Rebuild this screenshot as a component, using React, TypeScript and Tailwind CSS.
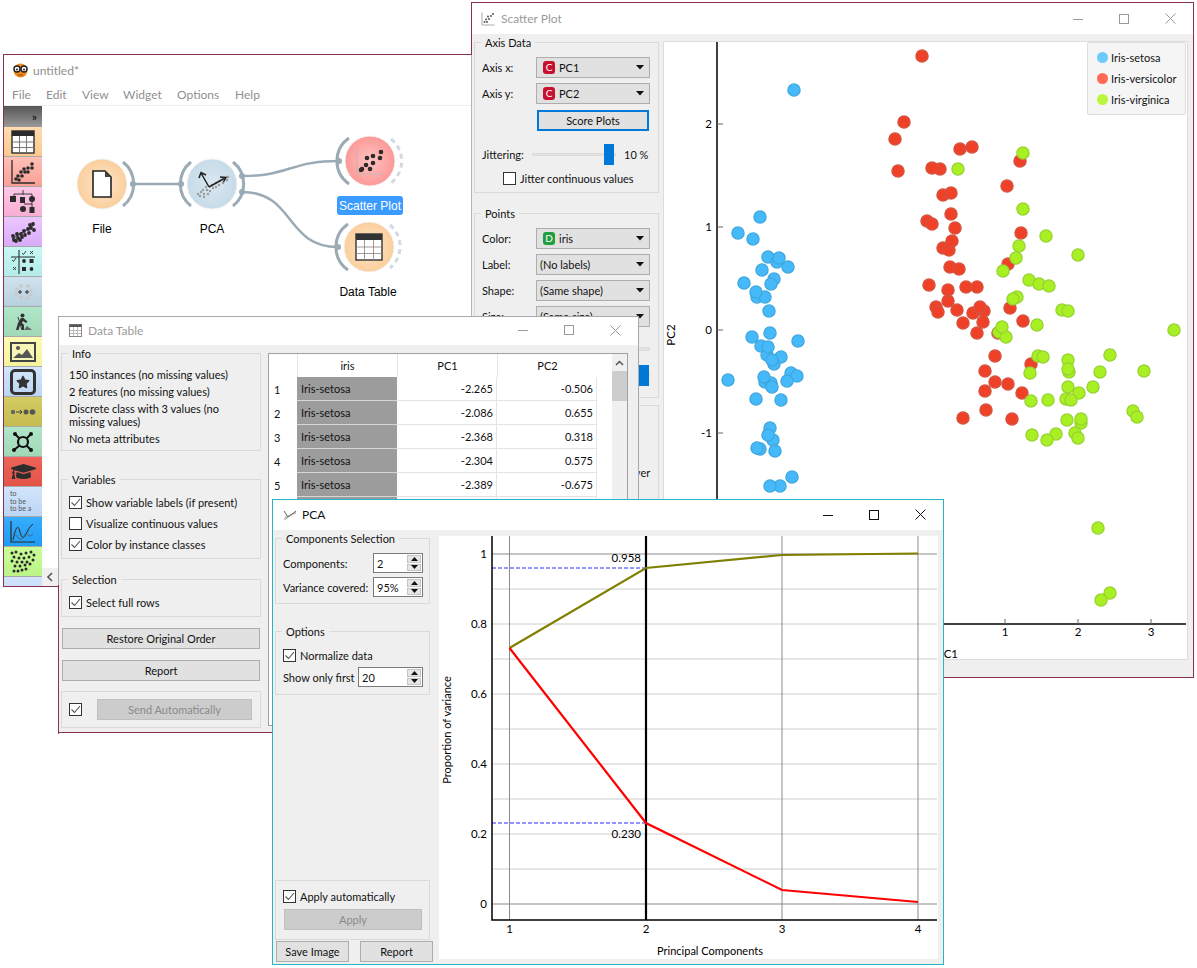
import React from 'react';
import { FaGraduationCap, FaStar } from 'react-icons/fa';

const BLUE: [number, number][] = [[794,90],[760,217],[738,233],[753,239],[768,257],[777,262],[779,258],[788,267],[762,270],[744,283],[774,279],[771,284],[757,297],[765,297],[756,292],[769,311],[770,333],[752,337],[798,341],[761,346],[767,355],[768,347],[781,357],[774,364],[772,360],[728,380],[791,373],[797,376],[787,381],[765,382],[771,383],[764,377],[772,387],[756,399],[781,400],[770,428],[773,440],[768,435],[760,449],[757,448],[775,451],[792,477],[780,486],[770,486]];
const RED: [number, number][] = [[922,56],[904,122],[895,139],[898,171],[940,169],[932,168],[927,221],[932,224],[960,149],[972,147],[1020,161],[1007,186],[943,195],[951,193],[951,214],[955,228],[1021,233],[943,248],[949,250],[952,241],[1008,264],[950,267],[959,269],[929,285],[948,301],[948,290],[966,287],[977,287],[936,307],[938,312],[957,310],[984,311],[973,313],[980,307],[1010,308],[1023,321],[963,323],[983,322],[977,333],[998,333],[995,356],[1031,364],[985,371],[995,382],[1008,384],[985,391],[1022,393],[986,410],[963,418],[1012,419]];
const GREEN: [number, number][] = [[1023,153],[958,169],[1023,209],[1046,236],[1078,255],[1019,246],[1016,258],[1003,271],[1029,280],[1039,284],[1049,286],[1017,297],[1013,299],[1062,310],[1068,311],[1037,325],[999,332],[1006,337],[1002,327],[1174,330],[1038,356],[1043,357],[1110,355],[1068,360],[1069,372],[1068,369],[1030,373],[1100,372],[1144,371],[1068,387],[1093,387],[1079,393],[1066,399],[1071,400],[1031,401],[1048,400],[1133,411],[1137,417],[1067,420],[1081,423],[1081,419],[1075,433],[1078,438],[1056,434],[1047,440],[1032,435],[1098,528],[1110,593],[1101,600]];

const ROWS = [
  ['1', '-2.265', '-0.506'],
  ['2', '-2.086', '0.655'],
  ['3', '-2.368', '0.318'],
  ['4', '-2.304', '0.575'],
  ['5', '-2.389', '-0.675'],
  ['6', '-2.070', '-1.519'],
];

const dark = '#2b2b2b';

function TableGlyph() {
  return (
    <svg width="26" height="26" viewBox="0 0 26 26">
      <rect x="2" y="2" width="22" height="22" fill="#fff" stroke={dark} strokeWidth="1.4" />
      <rect x="2" y="2" width="22" height="5" fill={dark} />
      <path d="M9.5 7v17M16.5 7v17M2 13h22M2 18.500h22" stroke="#777" strokeWidth="1" />
    </svg>
  );
}

const Dots = ({ pts, r = 1.6 }: { pts: number[][]; r?: number }) => (
  <>
    {pts.map(([x, y], i) => (
      <circle key={i} cx={x} cy={y} r={r} fill={dark} />
    ))}
  </>
);

const TOOLS: { cls: string; icon: React.ReactNode }[] = [
  { cls: 'from-[#ffdcb0] to-[#fbc98f]', icon: <TableGlyph /> },
  {
    cls: 'from-[#ffc0b6] to-[#f9a096]',
    icon: (
      <svg width="26" height="26" viewBox="0 0 26 26">
        <path d="M2 1v23h23" fill="none" stroke={dark} strokeWidth="1.3" />
        <Dots r={1.8} pts={[[6,20],[9,21],[8,17],[12,17],[11,13],[15,13],[14,10],[18,9],[18,13],[22,5],[22,9]]} />
      </svg>
    ),
  },
  {
    cls: 'from-[#ffc8e6] to-[#f7aed4]',
    icon: (
      <svg width="28" height="26" viewBox="0 0 28 26">
        <path d="M14 1v5M5 9V5h18v4M23 9v6h-8M23 15v3" fill="none" stroke={dark} strokeWidth="0.9" />
        <rect x="1" y="7" width="6" height="6" fill={dark} />
        <rect x="11" y="8" width="5" height="6" fill={dark} />
        <circle cx="23" cy="10" r="3" fill={dark} />
        <circle cx="14" cy="20" r="3" fill={dark} />
        <rect x="20.500" y="18" width="5" height="6" fill={dark} />
      </svg>
    ),
  },
  {
    cls: 'from-[#ecc6ff] to-[#d8acf8]',
    icon: (
      <svg width="26" height="24" viewBox="0 0 26 24">
        <path d="M2 19L24 5" stroke={dark} strokeWidth="1" />
        <Dots r={1.9} pts={[[3,16],[4,20],[7,14],[8,18],[6,21],[11,14],[12,17],[10,20],[14,11],[15,15],[18,9],[19,13],[21,8],[23,4],[24,10],[20,5]]} />
      </svg>
    ),
  },
  {
    cls: 'from-[#c8f8f4] to-[#b4ece8]',
    icon: (
      <svg width="26" height="26" viewBox="0 0 26 26">
        <path d="M1 8h24M9 1v24" stroke={dark} strokeWidth="1.1" />
        <path d="M12 4l1.500 1.500L16 2M2 11l1.500 1.500L6 9" fill="none" stroke={dark} strokeWidth="0.9" />
        <path d="M20 2l3 3M23 2l-3 3M3 18l3 3M6 18l-3 3" stroke={dark} strokeWidth="0.9" />
        <circle cx="14" cy="12" r="1.900" fill={dark} />
        <rect x="19.500" y="10" width="4" height="4" fill={dark} />
        <rect x="12" y="18" width="4" height="4" fill={dark} />
        <circle cx="21.500" cy="20" r="1.900" fill={dark} />
      </svg>
    ),
  },
  {
    cls: 'from-[#d0e2ee] to-[#b8d0de]',
    icon: (
      <svg width="20" height="18" viewBox="0 0 20 18">
        <g fill="#c8c8c8">
          <circle cx="4" cy="6" r="1.800" /><circle cx="8" cy="3" r="1.800" /><circle cx="3" cy="11" r="1.800" />
          <circle cx="8" cy="14" r="1.800" /><circle cx="15" cy="3" r="1.800" /><circle cx="18" cy="8" r="1.800" />
          <circle cx="14" cy="15" r="1.800" /><circle cx="17" cy="12" r="1.800" />
        </g>
        <path d="M5 9h4M7 7v4M12 9h4M14 7v4" stroke={dark} strokeWidth="1" />
      </svg>
    ),
  },
  {
    cls: 'from-[#b0e6c8] to-[#a0d8b8]',
    icon: (
      <svg width="18" height="18" viewBox="0 0 18 18">
        <circle cx="8.500" cy="2.500" r="2" fill="#333" />
        <path d="M7 5L4 10L2 17H4.500L6 12L8 13.500V17H10V12L8 10L9 8L12 10L13.500 8.500L9.500 5Z" fill="#333" />
        <path d="M4 4L8 17" stroke="#333" strokeWidth="1" />
        <path d="M10 17L13 13L18 17Z" fill="#666" />
      </svg>
    ),
  },
  {
    cls: 'from-[#fbfbb4] to-[#f4f49c]',
    icon: (
      <svg width="26" height="20" viewBox="0 0 26 20">
        <rect x="1" y="1" width="24" height="18" fill="#f6f6b8" stroke="#444" strokeWidth="2" />
        <circle cx="8" cy="6" r="2" fill="#555" />
        <path d="M3 16l6-5 3 2 5-6 6 9z" fill="#555" />
      </svg>
    ),
  },
  {
    cls: 'from-[#d2e6fc] to-[#bcd6f4]',
    icon: (
      <div className="w-[26px] h-[26px] rounded-[5px] border-[3px] border-[#333] flex items-center justify-center">
        <FaStar size={14} color="#333" />
      </div>
    ),
  },
  {
    cls: 'from-[#d4cc64] to-[#c4bc50]',
    icon: (
      <svg width="26" height="10" viewBox="0 0 26 10">
        <circle cx="3" cy="5" r="2.200" fill="#666" />
        <path d="M6 5h6M10 3l2 2-2 2" fill="none" stroke="#333" strokeWidth="0.9" />
        <circle cx="16" cy="5" r="2.500" fill="#555" />
        <circle cx="22.500" cy="5" r="2.800" fill="#555" />
      </svg>
    ),
  },
  {
    cls: 'from-[#b0e6c8] to-[#a0d8b8]',
    icon: (
      <svg width="24" height="24" viewBox="0 0 24 24">
        <circle cx="12" cy="12" r="5" fill="none" stroke="#111" strokeWidth="2.200" />
        <path d="M8.500 8.500L4 4M15.500 8.500L20 4M8.500 15.500L3 20M15.500 15.500L20 20" stroke="#111" strokeWidth="2" />
        <circle cx="4" cy="4" r="2" fill="#111" /><circle cx="20" cy="4" r="2" fill="#111" />
        <circle cx="3" cy="20" r="2" fill="#111" /><circle cx="20" cy="20" r="2" fill="#111" />
      </svg>
    ),
  },
  { cls: 'from-[#ee6458] to-[#e25448]', icon: <FaGraduationCap size={25} color="#2d2d2d" /> },
  {
    cls: 'from-[#d2e4fb] to-[#bcd6f6]',
    icon: (
      <div className="w-[26px] text-[7px] leading-[7.5px] text-[#555] font-[Lato,sans-serif]">
        to<br />to be<br />to be a
      </div>
    ),
  },
  {
    cls: 'from-[#36acfc] to-[#1e9cf4]',
    icon: (
      <svg width="26" height="24" viewBox="0 0 26 24">
        <path d="M1 1v21h24" fill="none" stroke={dark} strokeWidth="1.200" />
        <path d="M3 20C6 6 8 4 10 12s4 6 6 2 4-8 7-10" fill="none" stroke={dark} strokeWidth="1" />
        <path d="M3 13c3 0 5 7 8 6s4-7 6-5 3 3 6 0" fill="none" stroke="#555" strokeWidth="0.8" />
      </svg>
    ),
  },
  {
    cls: 'from-[#caff98] to-[#bcf488]',
    icon: (
      <svg width="26" height="24" viewBox="0 0 26 24">
        <Dots r={1.500} pts={[[2,3],[6,2],[11,4],[16,3],[21,2],[24,5],[4,7],[9,8],[14,8],[19,7],[23,10],[2,11],[7,12],[12,12],[17,12],[5,16],[10,16],[15,15],[20,14],[8,21],[12,20],[16,19],[4,21]]} />
      </svg>
    ),
  },
];

function WinButtons({ active }: { active?: boolean }) {
  const stroke = active ? '#111' : '#9a9a9a';
  return (
    <div className="flex h-full">
      <div className="w-[46px] flex items-center justify-center">
        <svg width="10" height="10"><path d="M0 5.500h10" stroke={stroke} /></svg>
      </div>
      <div className="w-[46px] flex items-center justify-center">
        <svg width="10" height="10"><rect x="0.500" y="0.500" width="9" height="9" fill="none" stroke={stroke} /></svg>
      </div>
      <div className="w-[46px] flex items-center justify-center">
        <svg width="11" height="11"><path d="M0.500 0.500l10 10M10.500 0.500l-10 10" stroke={stroke} /></svg>
      </div>
    </div>
  );
}

function GroupBox({ title, className, children }: { title: string; className: string; children?: React.ReactNode }) {
  return (
    <div className={`relative shrink-0 border border-[#dadada] ${className}`}>
      <div className="absolute left-[6px] top-[-8px] px-[4px] bg-[#efefef] leading-[16px] text-[#111]">{title}</div>
      {children}
    </div>
  );
}

function Combo({ badge, text, w = 'w-[114px]' }: { badge?: 'C' | 'D'; text: string; w?: string }) {
  return (
    <div className={`${w} h-[21px] shrink-0 bg-[#e1e1e1] border border-[#adadad] flex items-center pl-[3px] pr-[4px]`}>
      {badge && (
        <span className={`w-[12px] h-[13px] ml-[3px] mr-[4px] rounded-[3px] flex items-center justify-center text-white text-[10px] ${badge === 'C' ? 'bg-[#c8102e]' : 'bg-[#1e9e3e]'}`}>
          {badge}
        </span>
      )}
      <span className="flex-1 whitespace-nowrap">{text}</span>
      <svg width="9" height="5"><path d="M0 0h8L4 4.500z" fill="#111" /></svg>
    </div>
  );
}

function Field({ label, children }: { label: string; children: React.ReactNode }) {
  return (
    <div className="flex items-center h-[21px] pl-[7px]">
      <span className="w-[54px] shrink-0 whitespace-nowrap">{label}</span>
      {children}
    </div>
  );
}

function Check({ checked, label }: { checked?: boolean; label?: string }) {
  return (
    <div className="flex items-center h-[15px] whitespace-nowrap">
      <span className="w-[13px] h-[13px] shrink-0 bg-white border border-[#333] flex items-center justify-center">
        {checked && (
          <svg width="11" height="11"><path d="M1.500 5.500l3 3 5.500-6.500" fill="none" stroke="#555" strokeWidth="1.100" /></svg>
        )}
      </span>
      {label && <span className="ml-[4px]">{label}</span>}
    </div>
  );
}

function Btn({ text, disabled, focus, className }: { text: string; disabled?: boolean; focus?: boolean; className: string }) {
  const look = focus
    ? 'bg-[#e1e1e1] border-2 border-[#0078d7] text-[#111]'
    : disabled
      ? 'bg-[#cccccc] border border-[#bfbfbf] text-[#8a8a8a]'
      : 'bg-[#e1e1e1] border border-[#adadad] text-[#111]';
  return (
    <div className={`h-[21px] shrink-0 flex items-center justify-center whitespace-nowrap ${look} ${className}`}>
      {text}
    </div>
  );
}

function Spin({ value, className }: { value: string; className: string }) {
  return (
    <div className={`h-[20px] shrink-0 bg-white border border-[#7a7a7a] flex items-center pl-[3px] pr-[1px] ${className}`}>
      <span className="flex-1">{value}</span>
      <div className="w-[14px] h-[16px] flex flex-col gap-[1px]">
        <span className="flex-1 bg-[#e6e6e6] border border-[#c4c4c4] flex items-center justify-center">
          <svg width="7" height="4"><path d="M3.500 0L7 4H0z" fill="#111" /></svg>
        </span>
        <span className="flex-1 bg-[#e6e6e6] border border-[#c4c4c4] flex items-center justify-center">
          <svg width="7" height="4"><path d="M0 0h7L3.500 4z" fill="#111" /></svg>
        </span>
      </div>
    </div>
  );
}

function CanvasWindow() {
  return (
    <div className="absolute left-[3px] top-[54px] w-[470px] h-[533px] z-10 bg-white border border-[#8a2f57] flex flex-col overflow-hidden">
      <div className="h-[31px] shrink-0 flex items-center pl-[8px] text-[#8f8f8f]">
        <svg width="17" height="15" viewBox="0 0 17 15">
          <circle cx="8.500" cy="7.500" r="7" fill="#ef8a1c" />
          <circle cx="5" cy="6" r="3" fill="#fff" stroke="#222" strokeWidth="1.400" />
          <circle cx="12" cy="6" r="3" fill="#fff" stroke="#222" strokeWidth="1.400" />
          <circle cx="5" cy="6.500" r="1" fill="#222" />
          <circle cx="12" cy="6.500" r="1" fill="#222" />
          <path d="M6 12h5" stroke="#8a4a10" strokeWidth="1" />
        </svg>
        <span className="ml-[4px] text-[12px]">untitled*</span>
      </div>
      <div className="h-[20px] shrink-0 flex items-center pl-[8px] pb-[2px] text-[12px] text-[#8f8f8f] border-b border-[#eeeeee]">
        <span className="w-[34px]">File</span>
        <span className="w-[36px]">Edit</span>
        <span className="w-[41px]">View</span>
        <span className="w-[54px]">Widget</span>
        <span className="w-[58px]">Options</span>
        <span>Help</span>
      </div>
      <div className="flex-1 flex min-h-0">
        <div className="w-[38px] shrink-0 flex flex-col overflow-hidden">
          <div className="h-[21px] shrink-0 bg-linear-to-b from-[#565656] to-[#9a9a9a] flex items-center justify-end pr-[5px] text-[11px] font-bold text-[#222] leading-none">»</div>
          {TOOLS.map((t, i) => (
            <div key={i} className={`h-[30px] shrink-0 bg-linear-to-b ${t.cls} border-b border-[#a9a9a9] flex items-center justify-center overflow-hidden`}>
              {t.icon}
            </div>
          ))}
          <div className="h-[30px] shrink-0 bg-linear-to-b from-[#d2e4fb] to-[#bcd6f6]" />
        </div>
        <div className="flex-1 relative min-w-0">
          <svg width="430" height="480" viewBox="42 106 430 480" className="block">
            <defs>
              <radialGradient id="orange"><stop offset="0" stopColor="#fde6cc" /><stop offset="1" stopColor="#fbcf9c" /></radialGradient>
              <radialGradient id="pale"><stop offset="0" stopColor="#dae8f1" /><stop offset="1" stopColor="#c6dbe8" /></radialGradient>
              <radialGradient id="pink"><stop offset="0" stopColor="#ffc3c1" /><stop offset="1" stopColor="#fd9997" /></radialGradient>
            </defs>
            <g fill="none" stroke="#9babb5" strokeWidth="2.500">
              <path d="M133 184H181" />
              <path d="M242 176C290 176 290 161 339 161" />
              <path d="M242 192C295 192 285 247 338 247" />
            </g>
            <g fill="none" stroke="#9babb5" strokeWidth="3">
              <path d="M123 162A28 28 0 0 1 123 206" />
              <path d="M191 162A28 28 0 0 0 191 206" />
              <path d="M233 162A28 28 0 0 1 233 206" />
              <path d="M349 138A28 28 0 0 0 349 184" />
              <path d="M348 224A28 28 0 0 0 348 270" />
            </g>
            <g fill="none" stroke="#d3dadf" strokeWidth="3" strokeDasharray="5 4">
              <path d="M391 139A28 28 0 0 1 391 183" />
              <path d="M390 225A28 28 0 0 1 390 268" />
            </g>
            <g fill="#9babb5">
              <circle cx="133" cy="184" r="3" /><circle cx="181" cy="184" r="3" />
              <circle cx="242" cy="176" r="3" /><circle cx="242" cy="192" r="3" />
              <circle cx="339" cy="161" r="3" /><circle cx="338" cy="247" r="3" />
            </g>
            <circle cx="102" cy="184" r="25" fill="url(#orange)" stroke="#f4f4f4" />
            <circle cx="212" cy="184" r="25" fill="url(#pale)" stroke="#f4f4f4" />
            <circle cx="370" cy="161" r="25" fill="url(#pink)" stroke="#f4f4f4" />
            <circle cx="369" cy="247" r="25" fill="url(#orange)" stroke="#f4f4f4" />
            {/* file */}
            <path d="M93 171H105L111 177V197H93Z" fill="#fff" stroke="#222" strokeWidth="1.600" />
            <path d="M105 171V177H111" fill="#444" />
            {/* pca */}
            <g fill="#9a9a9a">
              {[[198,194],[201,192],[204,194],[203,190],[207,190],[206,187],[210,191],[213,188],[212,185],[216,187],[216,183],[219,185],[220,181],[223,183],[224,179],[227,180],[200,196],[204,197],[208,194],[228,177]].map(([x, y], i) => (
                <circle key={i} cx={x} cy={y} r="1.200" />
              ))}
            </g>
            <path d="M209 187L201 173M199 178L201 172.500L206 175M209 187L225 178M220 177L226 177.500L223.500 182" fill="none" stroke="#222" strokeWidth="1.500" />
            {/* scatter */}
            <path d="M357 148V174H383" fill="none" stroke="#c9b4b4" strokeWidth="1.200" />
            <g fill="#2b2b2b">
              {[[362,169],[366,165],[370,169],[373,163],[367,158],[373,156],[380,158],[381,152],[361,170]].map(([x, y], i) => (
                <circle key={i} cx={x} cy={y} r="2.300" />
              ))}
            </g>
            {/* table */}
            <rect x="356" y="234" width="26" height="26" fill="#fff" stroke="#333" strokeWidth="1.400" />
            <rect x="356" y="234" width="26" height="6" fill="#333" />
            <path d="M364.500 240v20M373.500 240v20M356 247h26M356 253.500h26" stroke="#8d7f7f" strokeWidth="0.800" />
            <rect x="337" y="196" width="66" height="19" rx="3" fill="#3b9bff" />
            <g className="font-['Liberation_Sans',Arial,sans-serif]" fontSize="12" textAnchor="middle">
              <text x="370" y="210" fill="#fff">Scatter Plot</text>
              <text x="102" y="233" fill="#000">File</text>
              <text x="212" y="233" fill="#000">PCA</text>
              <text x="368" y="296" fill="#000">Data Table</text>
            </g>
          </svg>
          <div className="absolute left-0 bottom-0 w-[16px] h-[18px] bg-[#f0f0f0] flex items-center justify-center">
            <svg width="8" height="10"><path d="M6 1L2 5l4 4" fill="none" stroke="#555" strokeWidth="1.600" /></svg>
          </div>
        </div>
      </div>
    </div>
  );
}

function ScatterWindow() {
  const dot = (pts: [number, number][], fill: string, stroke: string) =>
    pts.map(([x, y], i) => <circle key={i} cx={x} cy={y} r="6.100" fill={fill} stroke={stroke} strokeWidth="1.300" />);
  return (
    <div className="absolute left-[471px] top-[2px] w-[723px] h-[676px] z-20 bg-white border border-[#8a2f57] border-l-[#b5b5b5] flex flex-col">
      <div className="absolute left-[-1px] top-[-1px] w-[1px] h-[53px] bg-[#8a2f57]" />
      <div className="h-[31px] shrink-0 flex items-center justify-between pl-[9px] text-[#9a9a9a]">
        <div className="flex items-center">
          <svg width="14" height="14" viewBox="0 0 14 14">
            <path d="M1 0.500v12.500h12.500" fill="none" stroke="#aaa" strokeWidth="1" />
            <g fill="#555"><circle cx="3.500" cy="10" r="1" /><circle cx="6" cy="10" r="1" /><circle cx="5" cy="7.500" r="1" /><circle cx="8" cy="7" r="1" /><circle cx="7" cy="4.500" r="1" /><circle cx="10" cy="4" r="1" /><circle cx="12" cy="2" r="1" /></g>
          </svg>
          <span className="ml-[6px] text-[12px]">Scatter Plot</span>
        </div>
        <WinButtons />
      </div>
      <div className="flex-1 min-h-0 bg-[#efefef] flex pl-[2px] pr-[5px] pt-[7px] pb-[17px]">
        <div className="w-[185px] shrink-0 flex flex-col pt-[1px] overflow-x-clip">
          <GroupBox title="Axis Data" className="h-[151px] pt-[14px]">
            <Field label="Axis x:"><Combo badge="C" text="PC1" /></Field>
            <div className="h-[5px]" />
            <Field label="Axis y:"><Combo badge="C" text="PC2" /></Field>
            <Btn text="Score Plots" focus className="ml-[62px] w-[112px] mt-[6px]" />
            <div className="flex items-center h-[21px] mt-[13px] pl-[7px]">
              <span className="w-[50px]">Jittering:</span>
              <div className="relative w-[84px] h-[3px] bg-[#e3e3e3] border border-[#dcdcdc]">
                <div className="absolute right-[1px] top-[-10px] w-[10px] h-[21px] bg-[#0078d7]" />
              </div>
              <span className="ml-[8px] whitespace-nowrap">10 %</span>
            </div>
            <div className="mt-[6px] ml-[28px]">
              <Check label="Jitter continuous values" />
            </div>
          </GroupBox>
          <GroupBox title="Points" className="h-[185px] mt-[20px] pt-[14px]">
            <Field label="Color:"><Combo badge="D" text="iris" /></Field>
            <div className="h-[5px]" />
            <Field label="Label:"><Combo text="(No labels)" /></Field>
            <div className="h-[5px]" />
            <Field label="Shape:"><Combo text="(Same shape)" /></Field>
            <div className="h-[5px]" />
            <Field label="Size:"><Combo text="(Same size)" /></Field>
            <div className="h-[11px]" />
            <Field label="Symbol size:">
              <div className="w-[114px] h-[4px] bg-[#e3e3e3] border border-[#dcdcdc]" />
            </Field>
            <div className="h-[5px]" />
            <Field label="Opacity:">
              <div className="relative w-[114px] h-[4px] bg-[#e3e3e3] border border-[#dcdcdc]">
                <div className="absolute right-0 top-[-9px] w-[10px] h-[21px] bg-[#0078d7]" />
              </div>
            </Field>
          </GroupBox>
          <GroupBox title="Plot Properties" className="h-[110px] mt-[7px] pt-[11px] pl-[14px] flex flex-col gap-[1px]">
            <Check checked label="Show legend" />
            <Check label="Show gridlines" />
            <Check label="Show class density" />
            <Check label="Show all data on mouse hover" />
          </GroupBox>
        </div>
        <div className="relative flex-1 ml-[4px] bg-white border border-[#dddddd]">
          <svg width="522" height="617" viewBox="664 42 522 617" className="block font-[Lato,sans-serif]">
            <path d="M717 42V640M664 624H1186" stroke="#000" strokeWidth="1.500" fill="none" />
            <path d="M717 124h6M717 227h6M717 330h6M717 433h6M1005 624v-5M1078 624v-5M1151 624v-5" stroke="#666" />
            <g fontSize="11.500" fill="#000" textAnchor="end">
              <text x="712" y="128">2</text>
              <text x="712" y="231">1</text>
              <text x="712" y="334">0</text>
              <text x="712" y="437">-1</text>
              <text x="958" y="658">PC1</text>
            </g>
            <g fontSize="11.500" fill="#000" textAnchor="middle">
              <text x="1005" y="636">1</text>
              <text x="1078" y="636">2</text>
              <text x="1151" y="636">3</text>
              <text x="0" y="0" transform="translate(675 335) rotate(-90)">PC2</text>
            </g>
            {dot(BLUE, '#46b9fb', '#3fa8de')}
            {dot(RED, '#ee4128', '#d6523f')}
            {dot(GREEN, '#a8f024', '#97d32f')}
          </svg>
          <div className="absolute right-[1px] top-[0px] w-[99px] h-[73px] bg-[#f5f5f5] border border-[#dedede] rounded-[2px] flex flex-col justify-center gap-[10px] pl-[9px]">
            {[
              ['Iris-setosa', 'bg-[#6ccafc]'],
              ['Iris-versicolor', 'bg-[#ff6a55]'],
              ['Iris-virginica', 'bg-[#baf63c]'],
            ].map(([t, c]) => (
              <div key={t} className="flex items-center h-[11px] whitespace-nowrap">
                <span className={`w-[11px] h-[11px] rounded-full ${c}`} />
                <span className="ml-[3px]">{t}</span>
              </div>
            ))}
          </div>
        </div>
      </div>
    </div>
  );
}

function TableWindow() {
  return (
    <div className="absolute left-[58px] top-[316px] w-[581px] h-[417px] z-30 bg-white border border-[#a8a8a8] border-b-[#8a2f57] flex flex-col">
      <div className="absolute left-[-1px] top-[268px] w-[1px] h-[149px] bg-[#8a2f57]" />
      <div className="h-[28px] shrink-0 flex items-center justify-between pl-[10px] pb-[2px] text-[#9a9a9a]">
        <div className="flex items-center">
          <svg width="13" height="13" viewBox="0 0 13 13">
            <rect x="0.500" y="0.500" width="12" height="12" fill="#fff" stroke="#888" />
            <rect x="0.500" y="0.500" width="12" height="2.500" fill="#555" />
            <path d="M4.500 3v9M8.500 3v9M1 6.500h11M1 9.500h11" stroke="#bbb" />
          </svg>
          <span className="ml-[6px] text-[12px]">Data Table</span>
        </div>
        <WinButtons />
      </div>
      <div className="flex-1 min-h-0 bg-[#efefef] flex pl-[2px] pt-[8px] pr-[5px]">
        <div className="w-[200px] shrink-0 flex flex-col">
          <GroupBox title="Info" className="h-[98px] pt-[14px] pl-[7px] flex flex-col gap-[4px] leading-[13px]">
            <div>150 instances (no missing values)</div>
            <div>2 features (no missing values)</div>
            <div>Discrete class with 3 values (no<br />missing values)</div>
            <div>No meta attributes</div>
          </GroupBox>
          <GroupBox title="Variables" className="h-[80px] mt-[28px] pt-[15px] pl-[7px] flex flex-col gap-[6px]">
            <Check checked label="Show variable labels (if present)" />
            <Check label="Visualize continuous values" />
            <Check checked label="Color by instance classes" />
          </GroupBox>
          <GroupBox title="Selection" className="h-[38px] mt-[20px] pt-[15px] pl-[7px]">
            <Check checked label="Select full rows" />
          </GroupBox>
          <Btn text="Restore Original Order" className="mt-[11px] ml-[1px] w-[198px]" />
          <Btn text="Report" className="mt-[11px] ml-[1px] w-[198px]" />
          <div className="h-[37px] mt-[10px] border border-[#dadada] flex items-center pl-[7px] pr-[8px] shrink-0">
            <Check checked />
            <Btn text="Send Automatically" disabled className="ml-[15px] flex-1" />
          </div>
        </div>
        <div className="ml-[7px] w-[360px] h-[373px] bg-white border border-[#a0a0a0] flex overflow-hidden shrink-0">
          <div className="w-[328px] shrink-0">
            <div className="grid grid-cols-[28px_100px_100px_100px] h-[23px] items-center text-center">
              <span />
              <span className="border-l border-[#e4e4e4] h-full flex items-center justify-center">iris</span>
              <span className="border-l border-[#e4e4e4] h-full flex items-center justify-center">PC1</span>
              <span className="border-l border-[#e4e4e4] h-full flex items-center justify-center">PC2</span>
            </div>
            {ROWS.map(r => (
              <div key={r[0]} className="grid grid-cols-[28px_100px_100px_100px] h-[24px]">
                <span className="flex items-center pl-[5px]">{r[0]}</span>
                <span className="bg-[#9c9c9c] border-b border-[#d6d6d6] flex items-center pl-[4px]">Iris-setosa</span>
                <span className="border-b border-[#e4e4e4] border-r flex items-center justify-end pr-[3px]">{r[1]}</span>
                <span className="border-b border-[#e4e4e4] border-r flex items-center justify-end pr-[3px]">{r[2]}</span>
              </div>
            ))}
          </div>
          <div className="w-[15px] shrink-0" />
          <div className="w-[15px] shrink-0 h-full bg-[#f0f0f0] flex flex-col items-center">
            <div className="h-[17px] flex items-center">
              <svg width="9" height="6"><path d="M1 5l3.500-3.500L8 5" fill="none" stroke="#555" strokeWidth="1.500" /></svg>
            </div>
            <div className="w-full h-[30px] bg-[#cdcdcd]" />
          </div>
        </div>
      </div>
    </div>
  );
}

function PcaWindow() {
  const xs = [509.5, 646, 782, 918];
  return (
    <div className="absolute left-[272px] top-[499px] w-[672px] h-[466px] z-40 bg-white border border-[#25b6c6] flex flex-col">
      <div className="h-[30px] shrink-0 flex items-center justify-between pl-[9px] pb-[1px] text-[#111]">
        <div className="flex items-center">
          <svg width="15" height="14" viewBox="0 0 15 14">
            <g fill="#a8a8a8"><circle cx="3" cy="11" r="0.900" /><circle cx="5" cy="10" r="0.900" /><circle cx="7" cy="8" r="0.900" /><circle cx="9" cy="7" r="0.900" /><circle cx="11" cy="6" r="0.900" /><circle cx="13" cy="5" r="0.900" /><circle cx="4" cy="9" r="0.900" /></g>
            <path d="M6 9L2 3M6 9L14 3" fill="none" stroke="#666" strokeWidth="1" />
          </svg>
          <span className="ml-[5px] text-[12px]">PCA</span>
        </div>
        <WinButtons active />
      </div>
      <div className="flex-1 min-h-0 bg-[#efefef] flex pl-[2px] pr-[5px]">
        <div className="w-[158px] shrink-0 flex flex-col pt-[8px] pb-[2px]">
          <GroupBox title="Components Selection" className="w-[155px] h-[66px] pt-[14px] pl-[7px] flex flex-col gap-[4px]">
            <div className="flex items-center justify-between pr-[6px]">
              <span>Components:</span>
              <Spin value="2" className="w-[50px]" />
            </div>
            <div className="flex items-center justify-between pr-[6px]">
              <span className="whitespace-nowrap">Variance covered:</span>
              <Spin value="95%" className="w-[50px]" />
            </div>
          </GroupBox>
          <GroupBox title="Options" className="w-[155px] h-[64px] mt-[27px] pt-[16px] pl-[7px]">
            <Check checked label="Normalize data" />
            <div className="flex items-center justify-between pr-[6px] mt-[4px]">
              <span className="whitespace-nowrap">Show only first</span>
              <Spin value="20" className="w-[65px]" />
            </div>
          </GroupBox>
          <div className="flex-1" />
          <div className="w-[155px] h-[60px] shrink-0 border border-[#dadada] pt-[8px] pl-[7px]">
            <Check checked label="Apply automatically" />
            <Btn text="Apply" disabled className="w-[138px] ml-[1px] mt-[5px]" />
          </div>
          <div className="flex justify-between mt-[1px] pl-[1px]">
            <Btn text="Save Image" className="w-[73px]" />
            <Btn text="Report" className="w-[73px]" />
          </div>
        </div>
        <div className="flex-1 min-w-0 mt-[6px] mb-[5px] ml-[6px] bg-white">
          <svg width="498" height="422" viewBox="439 536 498 422" className="block font-[Lato,sans-serif]">
            <path d="M492 589H937M492 624H937M492 659H937M492 694H937M492 729H937M492 764H937M492 799H937M492 834H937M492 869H937" stroke="#cccccc" fill="none" />
            <path d="M492 554H937M492 904H937" stroke="#8a8a8a" fill="none" />
            <path d="M509.500 536V920M782 536V920M918 536V920" stroke="#8a8a8a" fill="none" />
            <path d="M646 536V920" stroke="#000" strokeWidth="2.200" />
            <path d="M492 568H646M492 823H646" stroke="#2b2bff" strokeDasharray="4 2" fill="none" />
            <polyline points="509.500,648 646,568 782,555 918,553.500" fill="none" stroke="#808000" strokeWidth="2.200" />
            <polyline points="509.500,648 646,823 782,890 918,902" fill="none" stroke="#ff0000" strokeWidth="2.200" />
            <path d="M492 536V920H937" stroke="#000" strokeWidth="1.500" fill="none" />
            <g fontSize="11.500" fill="#000" textAnchor="end">
              <text x="487" y="558">1</text>
              <text x="487" y="628">0.8</text>
              <text x="487" y="698">0.6</text>
              <text x="487" y="768">0.4</text>
              <text x="487" y="838">0.2</text>
              <text x="487" y="908">0</text>
              <text x="641" y="562">0.958</text>
              <text x="641" y="838">0.230</text>
            </g>
            <g fontSize="11" fill="#000" textAnchor="middle">
              {xs.map((x, i) => (
                <text key={i} x={x} y="933" fontSize="11.500">{i + 1}</text>
              ))}
              <text x="710" y="955">Principal Components</text>
              <text x="0" y="0" transform="translate(451 730) rotate(-90)">Proportion of variance</text>
            </g>
          </svg>
        </div>
      </div>
    </div>
  );
}

export default function App() {
  return (
    <div className="relative w-[1197px] h-[968px] overflow-hidden bg-white text-[11px] leading-[17px] text-[#111] font-[Lato,sans-serif]">
      <CanvasWindow />
      <ScatterWindow />
      <TableWindow />
      <PcaWindow />
    </div>
  );
}
